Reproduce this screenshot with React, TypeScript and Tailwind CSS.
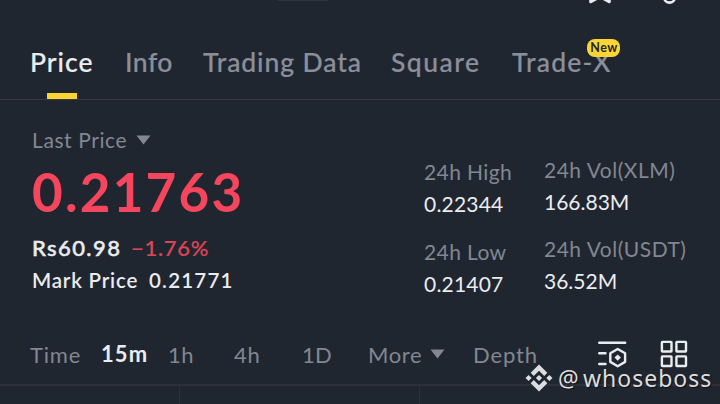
import clsx from "clsx";

interface TabProps {
    label: string;
    className: string;
    active?: boolean;
    badge?: string;
}

interface StatProps {
    label: string;
    value: string;
    labelClass: string;
    valueClass: string;
}

const Tab: React.FC<TabProps> = ({ label, className, active, badge }) => (
    <div className={clsx("relative flex flex-col justify-between h-[54px] shrink-0 text-[26.5px] leading-[34px] [-webkit-text-stroke:0.2px]", className)}>
        <span className={active ? "text-[#eaecef]" : "text-[#8b8f9a]"}>{label}</span>
        {active && <div className="ml-[17px] h-1.5 w-[30px] bg-[#fcd535]" />}
        {badge && (
            <span className="absolute left-[75px] -top-[6px] h-[18px] w-[33px] rounded-[8px] bg-[#fcd535] pl-px text-center text-[12.5px] leading-[18px] font-bold tracking-[0.5px] text-[#202630] [-webkit-text-stroke:0]">
                {badge}
            </span>
        )}
    </div>
);

const Stat: React.FC<StatProps> = ({ label, value, labelClass, valueClass }) => (
    <div className="flex flex-col gap-1 text-[21px] leading-7">
        <span className={clsx("text-[#828791]", labelClass)}>{label}</span>
        <span className={clsx("text-[#eaecef]", valueClass)}>{value}</span>
    </div>
);

const Caret = () => (
    <svg width="15" height="10" viewBox="0 0 15 10" fill="#828791">
        <path d="M0.5 0.5h14L7.5 9.5z" />
    </svg>
);

const SettingsIcon = () => (
    <svg width="30" height="28" viewBox="0 0 30 28" fill="none" stroke="#eaecef" strokeWidth="2.4">
        <path d="M2.2 2.8H28.2M2.2 13.3H8.5M2.2 24H8.5" strokeLinecap="round" />
        <path d="M20.7 9L28.1 13.3V21.9L20.7 26.2L13.3 21.9V13.3z" strokeLinejoin="round" />
        <path d="M20.7 14.4l3.2 3.2-3.2 3.2-3.2-3.2z" fill="#eaecef" stroke="none" />
    </svg>
);

const GridIcon = () => (
    <svg width="28" height="28" viewBox="0 0 28 28" fill="none" stroke="#eaecef" strokeWidth="2.4" strokeLinejoin="round">
        <rect x="1.9" y="1.9" width="9.6" height="9.6" rx="0.5" />
        <rect x="16.4" y="1.9" width="9.6" height="9.6" rx="0.5" />
        <rect x="1.9" y="16.4" width="9.6" height="9.6" rx="0.5" />
        <rect x="16.4" y="16.4" width="9.6" height="9.6" rx="0.5" />
    </svg>
);

const BinanceLogo = () => (
    <svg width="28" height="28" viewBox="0 0 28 28" fill="#dcdddf">
        <path d="M14 0.5L22.3 8.8L19.2 11.9L14 6.7L8.8 11.9L5.7 8.8z" />
        <path d="M14 27.5L22.3 19.2L19.2 16.1L14 21.3L8.8 16.1L5.7 19.2z" />
        <path d="M14 10.9l3.1 3.1-3.1 3.1-3.1-3.1zM3.6 10.9l3.1 3.1-3.1 3.1L0.5 14zM24.4 10.9l3.1 3.1-3.1 3.1-3.1-3.1z" />
    </svg>
);

const App = () => {
    return (
        <div className="relative flex flex-col w-[720px] h-[404px] overflow-hidden bg-[#202630] font-['Lato',sans-serif] font-medium whitespace-nowrap">
            {/* Bottom edge of the title bar */}
            <div className="flex h-[45px] shrink-0 items-start">
                <div className="ml-[278px] h-px w-[50px] bg-[#303641]" />
                <svg className="ml-[260px]" width="24" height="5" viewBox="0 0 24 5" fill="none" stroke="#eaecef" strokeWidth="2.6">
                    <path d="M2.5 -3V2L12 -3L21.5 2V-3" strokeLinejoin="round" />
                </svg>
                <svg className="ml-[50px]" width="16" height="5" viewBox="0 0 16 5" fill="none" stroke="#eaecef" strokeWidth="2.6">
                    <circle cx="7.5" cy="-2.8" r="5.4" />
                </svg>
            </div>

            <nav className="flex h-[55px] shrink-0 border-b border-[#363943] pl-[30px]">
                <Tab label="Price" className="w-[95px] tracking-[1px]" active />
                <Tab label="Info" className="w-[78px] tracking-[0.5px]" />
                <Tab label="Trading Data" className="w-[188px] tracking-[0.9px]" />
                <Tab label="Square" className="w-[121px] tracking-[1.5px]" />
                <Tab label="Trade-X" className="tracking-[1.2px]" badge="New" />
            </nav>

            <section className="flex h-[240px] shrink-0 pl-8">
                <div className="w-[392px] pt-[26px]">
                    <div className="flex items-center gap-2 h-7 text-[21px] leading-7 font-normal text-[#828791]">
                        <span className="w-[96px] tracking-[0.6px]">Last Price</span>
                        <Caret />
                    </div>
                    <div className="mt-2 h-[71px] text-[53px] leading-[60px] font-bold tracking-[2.2px] text-[#f6465d]">0.21763</div>
                    <div className="flex h-[33px] text-[22px] leading-[29px]">
                        <span className="w-[99px] tracking-[1.4px] text-[#eaecef] [-webkit-text-stroke:0.5px]">Rs60.98</span>
                        <span className="tracking-[0.7px] text-[#d94559] [-webkit-text-stroke:0.2px]">−1.76%</span>
                    </div>
                    <div className="flex text-[20.5px] leading-7 font-semibold text-[#eaecef]">
                        <span className="w-[117px] tracking-[0.8px]">Mark Price</span>
                        <span className="tracking-[1.2px]">0.21771</span>
                    </div>
                </div>
                <div className="flex w-[120px] flex-col gap-5 pt-[58px] font-normal">
                    <Stat label="24h High" value="0.22344" labelClass="tracking-[0.4px]" valueClass="tracking-[0.2px]" />
                    <Stat label="24h Low" value="0.21407" labelClass="tracking-[0.4px]" valueClass="tracking-[0.2px]" />
                </div>
                <div className="flex flex-col gap-[19px] pt-14 font-normal">
                    <Stat label="24h Vol(XLM)" value="166.83M" labelClass="tracking-[0.5px]" valueClass="tracking-[0px]" />
                    <Stat label="24h Vol(USDT)" value="36.52M" labelClass="tracking-[0.5px]" valueClass="tracking-[0px]" />
                </div>
            </section>

            <div className="flex h-[46px] shrink-0 border-b-2 border-[#2b303b] pl-[30px] text-[22px] leading-[29px] font-normal text-[#828791]">
                <span className="w-[71px] tracking-[0.8px]">Time</span>
                <span className="w-[67px] font-bold leading-7 tracking-[1.1px] text-[#eaecef]">15m</span>
                <span className="w-[66px] tracking-[0.5px]">1h</span>
                <span className="w-[68px] tracking-[0.8px]">4h</span>
                <span className="w-[66px] tracking-[0.3px]">1D</span>
                <div className="flex h-7 w-[105px] items-center">
                    <span className="w-[62px] tracking-[0.6px]">More</span>
                    <Caret />
                </div>
                <span className="w-[124px] tracking-[0.9px]">Depth</span>
                <div className="flex gap-[33px]">
                    <SettingsIcon />
                    <GridIcon />
                </div>
            </div>

            {/* First row of the chart grid */}
            <div className="flex flex-1">
                <div className="w-[180px] border-r border-[#2b303b]" />
                <div className="w-60 border-r border-[#2b303b]" />
            </div>

            <div className="absolute left-[525px] top-[364px] flex h-7 items-center font-['Noto_Sans',sans-serif] text-[23px] leading-7 font-normal text-[#dcdddf] [text-shadow:1px_1px_1px_#111]">
                <BinanceLogo />
                <span className="ml-[5px] w-[25px]">@</span>
                <span className="tracking-[1px]">whoseboss</span>
            </div>
        </div>
    );
};

export default App;
